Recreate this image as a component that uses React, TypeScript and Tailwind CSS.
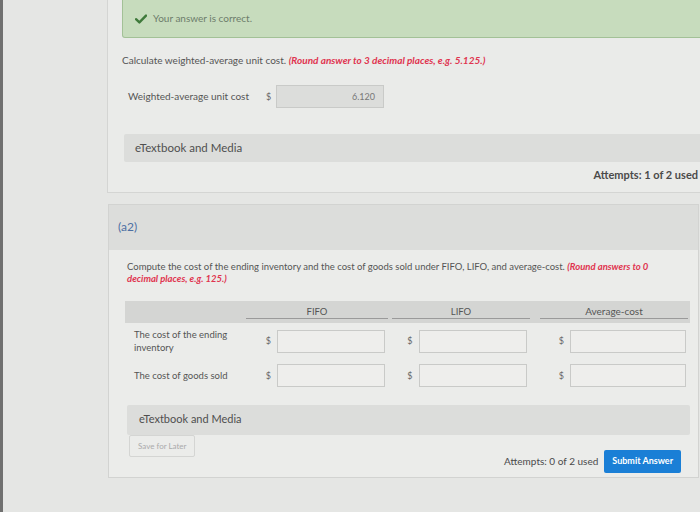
import React from 'react'

const font = { fontFamily: 'Lato, "Open Sans", sans-serif' }

function MoneyInput({ value = '', filled = false, w = 'w-[108px]' }: { value?: string; filled?: boolean; w?: string }) {
  return (
    <div
      className={`h-[23px] ${w} border border-[#c9cac8] text-right pr-[8px] text-[9px] leading-[21px] text-[#777] ${
        filled ? 'bg-[#dcdddb]' : 'bg-[#eeeeec]'
      }`}
    >
      {value}
    </div>
  )
}

function AmountCell({ cell, w, inputW }: { cell: string; w: string; inputW?: string }) {
  return (
    <div className={`${w} flex items-center justify-end ${cell}`}>
      <span className="mr-[6px] text-[9px] text-[#666]">$</span>
      <MoneyInput w={inputW} />
    </div>
  )
}

export default function App() {
  return (
    <div className="w-[700px] h-[512px] overflow-hidden bg-[#e5e6e4] border-l-[3px] border-[#707070] text-[#555]" style={font}>
      <div className="pl-[104px] w-[720px]">
        {/* first part */}
        <div className="bg-[#eaebe9] border border-t-0 border-[#d4d5d3] px-[14px] pb-[8px] w-[620px]">
          <div className="h-[38px] bg-[#c7dcbd] border border-t-0 border-[#a3c197] rounded-b-[3px] flex items-center pl-[12px] gap-[6px]">
            <svg width="12" height="10" viewBox="0 0 12 10">
              <path d="M1 5.2 L4.4 8.4 L11 1.6" fill="none" stroke="#3f7a3b" strokeWidth="2.4" strokeLinecap="round" strokeLinejoin="round" />
            </svg>
            <span className="text-[10px] text-[#6d7d6b]">Your answer is correct.</span>
          </div>

          <div className="mt-[15px] text-[10px] leading-[14px] text-[#555]">
            Calculate weighted-average unit cost.{' '}
            <span className="text-[#e0344f] font-bold italic">(Round answer to 3 decimal places, e.g. 5.125.)</span>
          </div>

          <div className="mt-[18px] flex items-center pl-[6px]">
            <span className="w-[138px] text-[10px] text-[#555]">Weighted-average unit cost</span>
            <span className="w-[10px] text-[9px] text-[#666]">$</span>
            <MoneyInput value="6.120" filled />
          </div>

          <div className="mt-[26px] ml-[2px] h-[28px] bg-[#dcdddb] rounded-[2px] flex items-center pl-[11px] text-[11.5px] text-[#4f4f4f]">
            eTextbook and Media
          </div>

          <div className="mt-[5px] flex justify-end pr-[14px] text-[11px] font-bold text-[#4a4a4a]">
            Attempts: 1 of 2 used
          </div>
        </div>

        {/* second part */}
        <div className="mt-[11px] ml-[1px] w-[591px] border border-[#d2d3d1] bg-[#ebecea]">
          <div className="h-[45px] bg-[#dcdddb] flex items-center pl-[9px] text-[12px] text-[#4d6fa3]">(a2)</div>
          <div className="pl-[16px] pr-[8px] pt-[11px] pb-[4px]">
            <div className="pl-[2px] text-[9.5px] leading-[12px] text-[#555] pr-[10px]">
              Compute the cost of the ending inventory and the cost of goods sold under FIFO, LIFO, and average-cost.{' '}
              <span className="text-[#e0344f] font-bold italic">(Round answers to 0 decimal places, e.g. 125.)</span>
            </div>

            {/* table header */}
            <div className="mt-[16px] h-[22px] bg-[#d4d5d3] flex items-end pb-[4px]">
              <div className="w-[121px]" />
              <div className="w-[142px] mr-[4px] border-b border-[#9a9a9a] text-center text-[9.5px] leading-[13px] text-[#555]">FIFO</div>
              <div className="w-[138px] mr-[10px] border-b border-[#9a9a9a] text-center text-[9.5px] leading-[13px] text-[#555]">LIFO</div>
              <div className="w-[148px] border-b border-[#9a9a9a] text-center text-[10px] leading-[13px] text-[#555]">Average-cost</div>
            </div>

            {/* rows */}
            <div className="mt-[5px] flex items-center h-[27px]">
              <div className="w-[121px] pl-[9px] text-[9.5px] leading-[13px] text-[#555]">
                The cost of the ending
                <br />
                inventory
              </div>
              <AmountCell w="w-[146px]" cell="pr-[6px]" />
              <AmountCell w="w-[142px]" cell="pr-[6px]" />
              <AmountCell w="w-[158px]" cell="pr-[4px]" inputW="w-[116px]" />
            </div>

            <div className="mt-[9px] flex items-center h-[24px]">
              <div className="w-[121px] pl-[9px] text-[9.5px] leading-[13px] text-[#555]">The cost of goods sold</div>
              <AmountCell w="w-[146px]" cell="pr-[6px]" />
              <AmountCell w="w-[142px]" cell="pr-[6px]" />
              <AmountCell w="w-[158px]" cell="pr-[4px]" inputW="w-[116px]" />
            </div>

            <div className="mt-[17px] ml-[2px] h-[30px] bg-[#dcdddb] rounded-[2px] flex items-center pl-[12px] text-[11px] text-[#4f4f4f]">
              eTextbook and Media
            </div>

            <div className="flex justify-between items-start">
              <div className="ml-[4px] h-[22px] px-[8px] border border-[#d4d5d3] rounded-[2px] flex items-center text-[8px] text-[#aaa]">
                Save for Later
              </div>
              <div className="mt-[15px] flex items-center gap-[6px] pr-[9px]">
                <span className="text-[10px] text-[#4a4a4a]">Attempts: 0 of 2 used</span>
                <div className="h-[23px] px-[8px] bg-[#1a7fd6] rounded-[2px] flex items-center text-[9px] font-bold text-white">
                  Submit Answer
                </div>
              </div>
            </div>
          </div>
        </div>
      </div>
    </div>
  )
}
